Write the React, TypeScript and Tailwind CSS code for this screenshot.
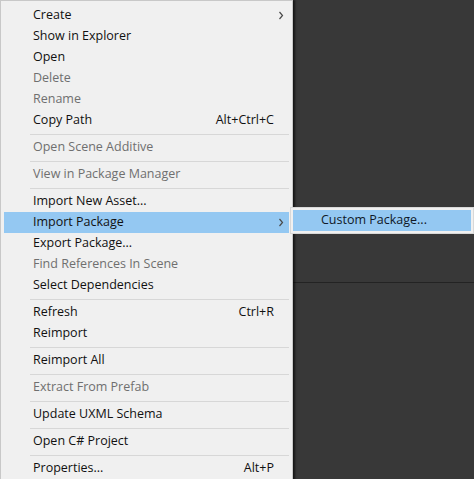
import React from "react";

type Item =
  | { kind: "sep" }
  | { kind: "item"; label: string; shortcut?: string; disabled?: boolean; sub?: boolean; active?: boolean };

const items: Item[] = [
  { kind: "item", label: "Create", sub: true },
  { kind: "item", label: "Show in Explorer" },
  { kind: "item", label: "Open" },
  { kind: "item", label: "Delete", disabled: true },
  { kind: "item", label: "Rename", disabled: true },
  { kind: "item", label: "Copy Path", shortcut: "Alt+Ctrl+C" },
  { kind: "sep" },
  { kind: "item", label: "Open Scene Additive", disabled: true },
  { kind: "sep" },
  { kind: "item", label: "View in Package Manager", disabled: true },
  { kind: "sep" },
  { kind: "item", label: "Import New Asset..." },
  { kind: "item", label: "Import Package", sub: true, active: true },
  { kind: "item", label: "Export Package..." },
  { kind: "item", label: "Find References In Scene", disabled: true },
  { kind: "item", label: "Select Dependencies" },
  { kind: "sep" },
  { kind: "item", label: "Refresh", shortcut: "Ctrl+R" },
  { kind: "item", label: "Reimport" },
  { kind: "sep" },
  { kind: "item", label: "Reimport All" },
  { kind: "sep" },
  { kind: "item", label: "Extract From Prefab", disabled: true },
  { kind: "sep" },
  { kind: "item", label: "Update UXML Schema" },
  { kind: "sep" },
  { kind: "item", label: "Open C# Project" },
  { kind: "sep" },
  { kind: "item", label: "Properties...", shortcut: "Alt+P" },
];

function Chevron() {
  return (
    <svg width="6" height="9" viewBox="0 0 6 9" fill="none">
      <path d="M1.5 1 L4.5 4.5 L1.5 8" stroke="#4a4a4a" strokeWidth="1.2" />
    </svg>
  );
}

export default function App() {
  return (
    <div
      className="relative w-[474px] h-[479px] overflow-hidden bg-[#383838]"
      style={{ fontFamily: '"Open Sans", "Noto Sans", sans-serif' }}
    >
      <div className="flex flex-col h-full">
        <div className="h-[283px] border-b border-[#232323]" />
        <div className="flex-1" />
      </div>

      {/* main context menu */}
      <div className="absolute left-0 top-0 w-[293px] h-[480px] bg-[#f0f0f0] border border-[#c8c8c8] shadow-[2px_0_2px_rgba(0,0,0,0.6)] pt-[4px] px-[3px] flex flex-col text-[12.5px] leading-none">
        {items.map((it, i) =>
          it.kind === "sep" ? (
            <div key={i} className="h-[6px] flex items-center pl-[26px]">
              <div className="h-px w-full bg-[#d7d7d7]" />
            </div>
          ) : (
            <div
              key={i}
              className={`h-[21px] flex items-center pl-[29px] ${it.active ? "bg-[#94c8f2]" : ""} ${
                it.disabled ? "text-[#6f6f6f]" : "text-[#111]"
              }`}
            >
              <span className="flex-1">{it.label}</span>
              {it.shortcut && <span>{it.shortcut}</span>}
              <span className="w-[15px] flex justify-center pr-[1px]">{it.sub && <Chevron />}</span>
            </div>
          )
        )}
      </div>

      {/* submenu */}
      <div className="absolute left-[290px] top-[207px] w-[184px] h-[27px] bg-[#f0f0f0] border border-[#d8d8d8] p-[2px] text-[12.5px] leading-none">
        <div className="h-full bg-[#94c8f2] flex items-center pl-[28px] text-[#101828]">Custom Package...</div>
      </div>
    </div>
  );
}
